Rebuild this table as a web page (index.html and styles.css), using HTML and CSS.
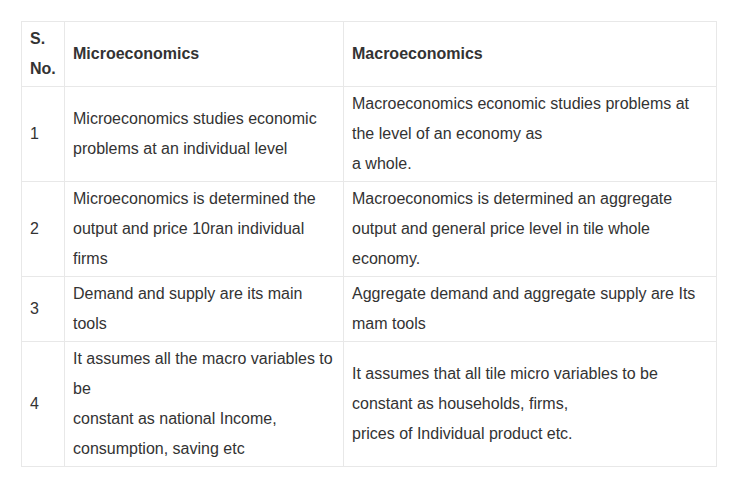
FILE: index.html
```html
<!DOCTYPE html>
<html>
<head>
<meta charset="utf-8">
<link rel="stylesheet" href="styles.css">
</head>
<body>
<table class="cmp">
  <colgroup>
    <col class="c-no">
    <col class="c-micro">
    <col class="c-macro">
  </colgroup>
  <thead>
    <tr>
      <th>S. No.</th>
      <th>Microeconomics</th>
      <th>Macroeconomics</th>
    </tr>
  </thead>
  <tbody>
    <tr>
      <td>1</td>
      <td>Microeconomics studies economic problems at an individual level</td>
      <td>Macroeconomics economic studies problems at the level of an economy as<br>a whole.</td>
    </tr>
    <tr>
      <td>2</td>
      <td>Microeconomics is determined the output and price 10ran individual firms</td>
      <td>Macroeconomics is determined an aggregate output and general price level in tile whole economy.</td>
    </tr>
    <tr>
      <td>3</td>
      <td>Demand and supply are its main tools</td>
      <td>Aggregate demand and aggregate supply are Its mam tools</td>
    </tr>
    <tr>
      <td>4</td>
      <td>It assumes all the macro variables to be<br>constant as national Income, consumption, saving etc</td>
      <td>It assumes that all tile micro variables to be<br>constant as households, firms,<br>prices of Individual product etc.</td>
    </tr>
  </tbody>
</table>
</body>
</html>
```
FILE: styles.css
```css
html, body {
  margin: 0;
  background: #ffffff;
}
body {
  padding: 21px 0 0 21px;
  font-family: "Liberation Sans", Arial, sans-serif;
  font-size: 16px;
  color: #333333;
}
.cmp {
  border-collapse: collapse;
  table-layout: fixed;
  width: 695px;
}
.c-no { width: 43px; }
.c-micro { width: 279px; }
.c-macro { width: 373px; }
.cmp th, .cmp td {
  border: 1px solid #e8e8e8;
  padding: 2px 8px;
  line-height: 30px;
  text-align: left;
  vertical-align: middle;
}
.cmp th {
  font-weight: bold;
}
```
